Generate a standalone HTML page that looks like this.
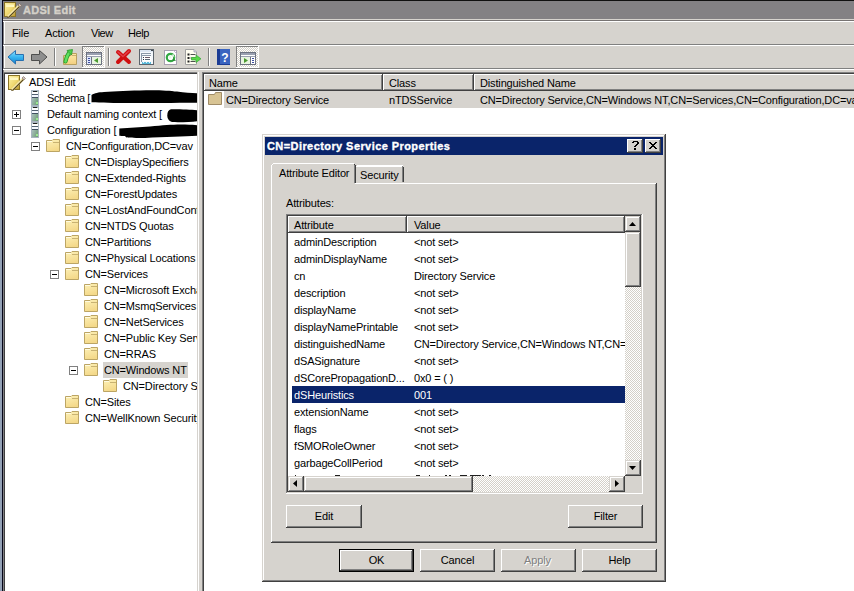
<!DOCTYPE html>
<html><head><meta charset="utf-8"><title>ADSI Edit</title>
<style>
html,body{margin:0;padding:0;width:854px;height:591px;overflow:hidden;background:#fff}
body{position:relative;font-family:'Liberation Sans',sans-serif;font-size:11px}
div,svg{position:absolute;box-sizing:content-box}
.t{white-space:nowrap;line-height:12px;font-size:11px;letter-spacing:-0.15px;font-family:'Liberation Sans',sans-serif;}
svg text{font-family:'Liberation Sans',sans-serif}
</style></head><body>
<div style="left:0px;top:0px;width:854px;height:591px;background:#d6d3ce;"></div>
<div style="left:0px;top:0px;width:2px;height:591px;background:#94a2b6;"></div>
<div style="left:2px;top:0px;width:1px;height:591px;background:#06061a;"></div>
<div style="left:2px;top:0px;width:852px;height:1px;background:#101010;"></div>
<div style="left:3px;top:1px;width:851px;height:18px;background:#838184;"></div>
<svg style="left:3px;top:1px" width="20" height="18" viewBox="0 0 20 18"><defs><linearGradient id="np1" x1="0" y1="0" x2="1" y2="1"><stop offset="0" stop-color="#fff4a8"/><stop offset="0.55" stop-color="#f0d870"/><stop offset="1" stop-color="#b89428"/></linearGradient></defs>
<rect x="1.5" y="1.5" width="11" height="14" fill="url(#np1)" stroke="#8a7428"/>
<rect x="3" y="3.5" width="8" height="2.5" fill="#fff8c0"/>
<path d="M4 15 L15 4 L17 6 L6 17 Z" fill="#f6e8a8"/>
<path d="M5.5 16.5 L16.5 5.5" stroke="#5a4a20" stroke-width="1.1"/>
<path d="M4 15 L4.5 17 L6 17 Z" fill="#5a4a20"/>
<path d="M15 4 L16.5 2.5 L18.5 4.5 L17 6 Z" fill="#d0c0c0" stroke="#7a6a50" stroke-width="0.6"/>
</svg>
<div class="t" style="left:23px;top:4px;color:#d4d0c8;font-weight:bold;letter-spacing:0.3px;-webkit-text-stroke:0.35px #d4d0c8;">ADSI Edit</div>
<div style="left:3px;top:19px;width:851px;height:1px;background:#d6d3ce;"></div>
<div style="left:3px;top:20px;width:851px;height:1px;background:#777372;"></div>
<div style="left:3px;top:21px;width:851px;height:1px;background:#fff;"></div>
<div style="left:3px;top:22px;width:1px;height:569px;background:#808080;"></div>
<div style="left:4px;top:22px;width:1px;height:22px;background:#fff;"></div>
<div class="t" style="left:12px;top:27px;color:#000;">File</div>
<div class="t" style="left:45px;top:27px;color:#000;">Action</div>
<div class="t" style="left:91px;top:27px;color:#000;letter-spacing:-0.5px;">View</div>
<div class="t" style="left:128px;top:27px;color:#000;letter-spacing:-0.4px;">Help</div>
<div style="left:3px;top:44px;width:851px;height:1px;background:#808080;"></div>
<div style="left:3px;top:45px;width:851px;height:1px;background:#fff;"></div>
<div style="left:4px;top:46px;width:1px;height:22px;background:#fff;"></div>
<div style="left:3px;top:68px;width:851px;height:1px;background:#808080;"></div>
<div style="left:3px;top:69px;width:851px;height:1px;background:#fff;"></div>
<div style="left:54px;top:48px;width:1px;height:18px;background:#808080;"></div>
<div style="left:55px;top:48px;width:1px;height:18px;background:#fff;"></div>
<div style="left:108px;top:48px;width:1px;height:18px;background:#808080;"></div>
<div style="left:109px;top:48px;width:1px;height:18px;background:#fff;"></div>
<div style="left:208px;top:48px;width:1px;height:18px;background:#808080;"></div>
<div style="left:209px;top:48px;width:1px;height:18px;background:#fff;"></div>
<div style="left:82px;top:46px;width:23px;height:22px;background-color:#fff;background-image:linear-gradient(45deg,#d4d0c8 25%,transparent 25%,transparent 75%,#d4d0c8 75%),linear-gradient(45deg,#d4d0c8 25%,transparent 25%,transparent 75%,#d4d0c8 75%);background-size:2px 2px;background-position:0 0,1px 1px;"></div>
<div style="left:82px;top:46px;width:23px;height:1px;background:#808080;"></div>
<div style="left:82px;top:46px;width:1px;height:22px;background:#808080;"></div>
<div style="left:82px;top:67px;width:23px;height:1px;background:#fff;"></div>
<div style="left:104px;top:46px;width:1px;height:22px;background:#fff;"></div>
<div style="left:236px;top:46px;width:23px;height:22px;background-color:#fff;background-image:linear-gradient(45deg,#d4d0c8 25%,transparent 25%,transparent 75%,#d4d0c8 75%),linear-gradient(45deg,#d4d0c8 25%,transparent 25%,transparent 75%,#d4d0c8 75%);background-size:2px 2px;background-position:0 0,1px 1px;"></div>
<div style="left:236px;top:46px;width:23px;height:1px;background:#808080;"></div>
<div style="left:236px;top:46px;width:1px;height:22px;background:#808080;"></div>
<div style="left:236px;top:67px;width:23px;height:1px;background:#fff;"></div>
<div style="left:258px;top:46px;width:1px;height:22px;background:#fff;"></div>
<svg style="left:7px;top:49px" width="18" height="17" viewBox="0 0 18 17">
<defs><linearGradient id="gb" x1="0" y1="0" x2="0" y2="1"><stop offset="0" stop-color="#8ee0ff"/><stop offset="0.5" stop-color="#38b4f0"/><stop offset="1" stop-color="#1080d0"/></linearGradient></defs>
<path d="M1 8 L8.5 1.5 L8.5 5.5 L16.5 5.5 L16.5 11.5 L8.5 11.5 L8.5 15 Z" fill="url(#gb)" stroke="#2870b0" stroke-width="1"/>
</svg>
<svg style="left:30px;top:49px" width="18" height="17" viewBox="0 0 18 17">
<path d="M17 8 L9.5 1.5 L9.5 5.5 L1.5 5.5 L1.5 11.5 L9.5 11.5 L9.5 15 Z" fill="#8e8e8e" stroke="#4e4e4e" stroke-width="1"/>
</svg>
<svg style="left:63px;top:49px" width="16" height="17" viewBox="0 0 16 17">
<defs><linearGradient id="fu" x1="0" y1="0" x2="0" y2="1"><stop offset="0" stop-color="#fde9a8"/><stop offset="1" stop-color="#f3cf80"/></linearGradient></defs>
<path d="M0.5 6.5 L8 6.5 L9 4.5 L13.5 4.5 L13.5 15.5 L0.5 15.5 Z" fill="url(#fu)" stroke="#b8a060"/>
<path d="M9 6.5 L13 6.5" stroke="#c8b070"/>
<path d="M2.5 12.5 C3 9 4.5 6 6.5 3" stroke="#2c9a2c" stroke-width="4.2" fill="none" stroke-linecap="round"/>
<path d="M2.5 12.5 C3 9 4.5 6 6.5 3" stroke="#5ee05e" stroke-width="2.4" fill="none" stroke-linecap="round"/>
<path d="M4 1.5 L9.5 0.5 L8.5 6 Z" fill="#4cd04c" stroke="#2c9a2c" stroke-width="0.8"/>
</svg>
<svg style="left:86px;top:52px" width="16" height="13" viewBox="0 0 16 13">
<rect x="0.5" y="0.5" width="15" height="12" fill="#fff" stroke="#6c7280"/>
<rect x="1" y="1" width="14" height="2" fill="#9aa0b0"/>
<rect x="1" y="4" width="14" height="1" fill="#9aa0b0"/>
<rect x="1" y="5" width="4" height="7" fill="#e0e8ff"/>
<rect x="5" y="5" width="1" height="7" fill="#6c7280"/>
<rect x="2" y="6" width="2" height="1" fill="#4050a0"/><rect x="2" y="8" width="2" height="1" fill="#4050a0"/><rect x="2" y="10" width="2" height="1" fill="#4050a0"/>
<rect x="6" y="5" width="9" height="7" fill="#e8f4e0"/>
<path d="M8 8.5 L12 6 L12 11 Z" fill="#4a9a30"/>
</svg>
<svg style="left:240px;top:52px" width="16" height="13" viewBox="0 0 16 13">
<rect x="0.5" y="0.5" width="15" height="12" fill="#fff" stroke="#6c7280"/>
<rect x="1" y="1" width="14" height="2" fill="#9aa0b0"/>
<rect x="1" y="4" width="14" height="1" fill="#9aa0b0"/>
<rect x="1" y="5" width="9" height="7" fill="#e8f4e0"/>
<rect x="10" y="5" width="1" height="7" fill="#6c7280"/>
<rect x="12" y="6" width="2" height="1" fill="#4050a0"/><rect x="12" y="8" width="2" height="1" fill="#4050a0"/><rect x="12" y="10" width="2" height="1" fill="#4050a0"/>
<path d="M4 6 L8 8.5 L4 11 Z" fill="#4a9a30"/>
</svg>
<svg style="left:115px;top:48px" width="18" height="17" viewBox="0 0 18 17">
<path d="M3 4 L14 14 M14 3 L3 14" stroke="#d01010" stroke-width="4" stroke-linecap="round"/>
<path d="M3 4 L8 8.5 M14 3 L9 7.5" stroke="#f06070" stroke-width="1.5" stroke-linecap="round" opacity="0.6"/>
</svg>
<svg style="left:139px;top:49px" width="15" height="16" viewBox="0 0 15 16" shape-rendering="crispEdges">
<rect x="0" y="0" width="15" height="16" fill="#5c646c"/>
<rect x="1" y="1" width="13" height="14" fill="#f4f8fc"/>
<rect x="1" y="1" width="13" height="2" fill="#dce6f2"/>
<rect x="12" y="1" width="2" height="1" fill="#404850"/>
<rect x="2" y="4" width="1" height="9" fill="#8a98a8"/>
<rect x="2" y="4" width="10" height="1" fill="#8a98a8"/>
<rect x="4" y="7" width="8" height="5" fill="#fff"/>
<rect x="3" y="6" width="9" height="1" fill="#8a98a8"/>
<rect x="4" y="8" width="1" height="1" fill="#303848"/><rect x="6" y="8" width="5" height="1" fill="#6a5a68"/>
<rect x="4" y="10" width="1" height="1" fill="#303848"/><rect x="6" y="10" width="5" height="1" fill="#5a6a78"/>
<rect x="3" y="13" width="9" height="2" fill="#58b8d8"/>
<rect x="4" y="13" width="1" height="1" fill="#e0f4fc"/><rect x="7" y="13" width="1" height="1" fill="#e0f4fc"/><rect x="10" y="13" width="1" height="1" fill="#e0f4fc"/>
</svg>
<svg style="left:164px;top:50px" width="13" height="15" viewBox="0 0 13 15">
<rect x="0.5" y="0.5" width="12" height="14" fill="#fff" stroke="#a8a0b0"/>
<path d="M9.5 0.5 L12.5 3.5" stroke="#c8b8d8"/>
<circle cx="6.5" cy="7.5" r="3.7" fill="none" stroke="#34a844" stroke-width="2.2"/>
<path d="M7.5 5 L10.5 7.5 L9.5 4 Z" fill="#e8f8e8"/>
<path d="M9.8 8.5 L12 10.8 L8.2 11 Z" fill="#2a8a34"/>
<circle cx="6" cy="7.2" r="1.3" fill="#e8f8e8"/>
</svg>
<svg style="left:185px;top:49px" width="17" height="16" viewBox="0 0 17 16">
<path d="M0.5 0.5 L9 0.5 L11.5 3 L11.5 15.5 L0.5 15.5 Z" fill="#fffdf0" stroke="#a0a0a0"/>
<path d="M9 0.5 L9 3 L11.5 3" fill="#e0e0f0" stroke="#a0a0b0" stroke-width="0.8"/>
<rect x="2.5" y="4.5" width="2" height="2" fill="#202020"/><rect x="5.5" y="5" width="5" height="1" fill="#505050"/>
<rect x="2.5" y="8" width="2" height="2" fill="#202020"/><rect x="5.5" y="8.5" width="5" height="1" fill="#505050"/>
<rect x="2.5" y="11.5" width="2" height="2" fill="#202020"/><rect x="5.5" y="12" width="5" height="1" fill="#505050"/>
<path d="M6.5 8.5 L11 8.5 L11 6 L16 9.8 L11 13.5 L11 11 L6.5 11 Z" fill="#5ad848" stroke="#38a838" stroke-width="0.7"/>
</svg>
<svg style="left:217px;top:49px" width="13" height="16" viewBox="0 0 13 16">
<rect x="0" y="0" width="13" height="16" fill="#3a64c0"/>
<rect x="0" y="0" width="3" height="16" fill="#1c3c94"/>
<rect x="0" y="15" width="13" height="1" fill="#1c3c94"/>
<text x="8" y="12.5" font-family="Liberation Sans" font-weight="bold" font-size="12" fill="#fff" text-anchor="middle">?</text>
</svg>
<div style="left:3px;top:72px;width:195px;height:1px;background:#808080;"></div>
<div style="left:4px;top:73px;width:194px;height:1px;background:#404040;"></div>
<div style="left:4px;top:73px;width:1px;height:518px;background:#404040;"></div>
<div style="left:5px;top:74px;width:192px;height:517px;background:#fff;"></div>
<div style="left:197px;top:72px;width:1px;height:519px;background:#d6d3ce;"></div>
<div style="left:198px;top:72px;width:1px;height:519px;background:#fff;"></div>
<div style="left:202px;top:72px;width:652px;height:1px;background:#808080;"></div>
<div style="left:202px;top:72px;width:1px;height:519px;background:#808080;"></div>
<div style="left:203px;top:73px;width:651px;height:1px;background:#404040;"></div>
<div style="left:203px;top:73px;width:1px;height:518px;background:#404040;"></div>
<div style="left:204px;top:74px;width:650px;height:517px;background:#fff;"></div>
<div style="left:5px;top:74px;width:192px;height:517px;overflow:hidden">
<svg style="left:2px;top:0px" width="20" height="18" viewBox="0 0 20 18"><defs><linearGradient id="np2" x1="0" y1="0" x2="1" y2="1"><stop offset="0" stop-color="#fff4a8"/><stop offset="0.55" stop-color="#f0d870"/><stop offset="1" stop-color="#b89428"/></linearGradient></defs>
<rect x="1.5" y="1.5" width="11" height="14" fill="url(#np2)" stroke="#8a7428"/>
<rect x="3" y="3.5" width="8" height="2.5" fill="#fff8c0"/>
<path d="M4 15 L15 4 L17 6 L6 17 Z" fill="#f6e8a8"/>
<path d="M5.5 16.5 L16.5 5.5" stroke="#5a4a20" stroke-width="1.1"/>
<path d="M4 15 L4.5 17 L6 17 Z" fill="#5a4a20"/>
<path d="M15 4 L16.5 2.5 L18.5 4.5 L17 6 Z" fill="#d0c0c0" stroke="#7a6a50" stroke-width="0.6"/>
</svg>
<div class="t" style="left:24px;top:2px;color:#000;">ADSI Edit</div>
<svg style="left:26px;top:16px" width="8" height="16" viewBox="0 0 8 16">
<defs><linearGradient id="sg" x1="0" y1="0" x2="1" y2="1"><stop offset="0" stop-color="#c0ccd8"/><stop offset="1" stop-color="#6a9a70"/></linearGradient></defs>
<rect x="0" y="0" width="8" height="16" fill="#a8b4c0"/>
<rect x="1" y="1" width="6" height="14" fill="url(#sg)"/>
<rect x="2" y="1" width="4" height="1" fill="#202020"/>
<rect x="1" y="2" width="6" height="2" fill="#fff"/>
<rect x="1" y="4" width="6" height="1" fill="#506070"/>
<rect x="1" y="5" width="6" height="2" fill="#f4f8ff"/>
<rect x="1" y="7" width="6" height="1" fill="#405060"/>
<rect x="5" y="12" width="2" height="2" fill="#9ae890"/>
</svg>
<div class="t" style="left:42px;top:18px;color:#000;letter-spacing:-0.45px;">Schema [</div>
<svg style="left:26px;top:32px" width="8" height="16" viewBox="0 0 8 16">
<defs><linearGradient id="sg" x1="0" y1="0" x2="1" y2="1"><stop offset="0" stop-color="#c0ccd8"/><stop offset="1" stop-color="#6a9a70"/></linearGradient></defs>
<rect x="0" y="0" width="8" height="16" fill="#a8b4c0"/>
<rect x="1" y="1" width="6" height="14" fill="url(#sg)"/>
<rect x="2" y="1" width="4" height="1" fill="#202020"/>
<rect x="1" y="2" width="6" height="2" fill="#fff"/>
<rect x="1" y="4" width="6" height="1" fill="#506070"/>
<rect x="1" y="5" width="6" height="2" fill="#f4f8ff"/>
<rect x="1" y="7" width="6" height="1" fill="#405060"/>
<rect x="5" y="12" width="2" height="2" fill="#9ae890"/>
</svg>
<div style="left:7px;top:36px;width:7px;height:7px;border:1px solid #808080;background:#fff"></div>
<div style="left:9px;top:40px;width:5px;height:1px;background:#000;"></div>
<div style="left:11px;top:38px;width:1px;height:5px;background:#000;"></div>
<div class="t" style="left:42px;top:34px;color:#000;">Default naming context [</div>
<svg style="left:26px;top:48px" width="8" height="16" viewBox="0 0 8 16">
<defs><linearGradient id="sg" x1="0" y1="0" x2="1" y2="1"><stop offset="0" stop-color="#c0ccd8"/><stop offset="1" stop-color="#6a9a70"/></linearGradient></defs>
<rect x="0" y="0" width="8" height="16" fill="#a8b4c0"/>
<rect x="1" y="1" width="6" height="14" fill="url(#sg)"/>
<rect x="2" y="1" width="4" height="1" fill="#202020"/>
<rect x="1" y="2" width="6" height="2" fill="#fff"/>
<rect x="1" y="4" width="6" height="1" fill="#506070"/>
<rect x="1" y="5" width="6" height="2" fill="#f4f8ff"/>
<rect x="1" y="7" width="6" height="1" fill="#405060"/>
<rect x="5" y="12" width="2" height="2" fill="#9ae890"/>
</svg>
<div style="left:7px;top:52px;width:7px;height:7px;border:1px solid #808080;background:#fff"></div>
<div style="left:9px;top:56px;width:5px;height:1px;background:#000;"></div>
<div class="t" style="left:42px;top:50px;color:#000;">Configuration [</div>
<svg style="left:41px;top:65px" width="14" height="13" viewBox="0 0 14 13">
<defs><linearGradient id="fg" x1="0" y1="0" x2="0.3" y2="1"><stop offset="0" stop-color="#fdf1b8"/><stop offset="1" stop-color="#f4d98a"/></linearGradient></defs>
<path d="M0.5 1.5 L6 1.5 L7 0.5 L13.5 0.5 L13.5 12.5 L0.5 12.5 Z" fill="url(#fg)" stroke="#bca564"/>
<path d="M7 3.5 L13 3.5" stroke="#c8b272"/>
<path d="M1 2.5 L6 2.5" stroke="#fffbe0"/>
</svg>
<div style="left:26px;top:68px;width:7px;height:7px;border:1px solid #808080;background:#fff"></div>
<div style="left:28px;top:72px;width:5px;height:1px;background:#000;"></div>
<div class="t" style="left:61px;top:66px;color:#000;">CN=Configuration,DC=vav</div>
<svg style="left:60px;top:81px" width="14" height="13" viewBox="0 0 14 13">
<defs><linearGradient id="fg" x1="0" y1="0" x2="0.3" y2="1"><stop offset="0" stop-color="#fdf1b8"/><stop offset="1" stop-color="#f4d98a"/></linearGradient></defs>
<path d="M0.5 1.5 L6 1.5 L7 0.5 L13.5 0.5 L13.5 12.5 L0.5 12.5 Z" fill="url(#fg)" stroke="#bca564"/>
<path d="M7 3.5 L13 3.5" stroke="#c8b272"/>
<path d="M1 2.5 L6 2.5" stroke="#fffbe0"/>
</svg>
<div class="t" style="left:80px;top:82px;color:#000;">CN=DisplaySpecifiers</div>
<svg style="left:60px;top:97px" width="14" height="13" viewBox="0 0 14 13">
<defs><linearGradient id="fg" x1="0" y1="0" x2="0.3" y2="1"><stop offset="0" stop-color="#fdf1b8"/><stop offset="1" stop-color="#f4d98a"/></linearGradient></defs>
<path d="M0.5 1.5 L6 1.5 L7 0.5 L13.5 0.5 L13.5 12.5 L0.5 12.5 Z" fill="url(#fg)" stroke="#bca564"/>
<path d="M7 3.5 L13 3.5" stroke="#c8b272"/>
<path d="M1 2.5 L6 2.5" stroke="#fffbe0"/>
</svg>
<div class="t" style="left:80px;top:98px;color:#000;">CN=Extended-Rights</div>
<svg style="left:60px;top:113px" width="14" height="13" viewBox="0 0 14 13">
<defs><linearGradient id="fg" x1="0" y1="0" x2="0.3" y2="1"><stop offset="0" stop-color="#fdf1b8"/><stop offset="1" stop-color="#f4d98a"/></linearGradient></defs>
<path d="M0.5 1.5 L6 1.5 L7 0.5 L13.5 0.5 L13.5 12.5 L0.5 12.5 Z" fill="url(#fg)" stroke="#bca564"/>
<path d="M7 3.5 L13 3.5" stroke="#c8b272"/>
<path d="M1 2.5 L6 2.5" stroke="#fffbe0"/>
</svg>
<div class="t" style="left:80px;top:114px;color:#000;">CN=ForestUpdates</div>
<svg style="left:60px;top:129px" width="14" height="13" viewBox="0 0 14 13">
<defs><linearGradient id="fg" x1="0" y1="0" x2="0.3" y2="1"><stop offset="0" stop-color="#fdf1b8"/><stop offset="1" stop-color="#f4d98a"/></linearGradient></defs>
<path d="M0.5 1.5 L6 1.5 L7 0.5 L13.5 0.5 L13.5 12.5 L0.5 12.5 Z" fill="url(#fg)" stroke="#bca564"/>
<path d="M7 3.5 L13 3.5" stroke="#c8b272"/>
<path d="M1 2.5 L6 2.5" stroke="#fffbe0"/>
</svg>
<div class="t" style="left:80px;top:130px;color:#000;">CN=LostAndFoundConfig</div>
<svg style="left:60px;top:145px" width="14" height="13" viewBox="0 0 14 13">
<defs><linearGradient id="fg" x1="0" y1="0" x2="0.3" y2="1"><stop offset="0" stop-color="#fdf1b8"/><stop offset="1" stop-color="#f4d98a"/></linearGradient></defs>
<path d="M0.5 1.5 L6 1.5 L7 0.5 L13.5 0.5 L13.5 12.5 L0.5 12.5 Z" fill="url(#fg)" stroke="#bca564"/>
<path d="M7 3.5 L13 3.5" stroke="#c8b272"/>
<path d="M1 2.5 L6 2.5" stroke="#fffbe0"/>
</svg>
<div class="t" style="left:80px;top:146px;color:#000;">CN=NTDS Quotas</div>
<svg style="left:60px;top:161px" width="14" height="13" viewBox="0 0 14 13">
<defs><linearGradient id="fg" x1="0" y1="0" x2="0.3" y2="1"><stop offset="0" stop-color="#fdf1b8"/><stop offset="1" stop-color="#f4d98a"/></linearGradient></defs>
<path d="M0.5 1.5 L6 1.5 L7 0.5 L13.5 0.5 L13.5 12.5 L0.5 12.5 Z" fill="url(#fg)" stroke="#bca564"/>
<path d="M7 3.5 L13 3.5" stroke="#c8b272"/>
<path d="M1 2.5 L6 2.5" stroke="#fffbe0"/>
</svg>
<div class="t" style="left:80px;top:162px;color:#000;">CN=Partitions</div>
<svg style="left:60px;top:177px" width="14" height="13" viewBox="0 0 14 13">
<defs><linearGradient id="fg" x1="0" y1="0" x2="0.3" y2="1"><stop offset="0" stop-color="#fdf1b8"/><stop offset="1" stop-color="#f4d98a"/></linearGradient></defs>
<path d="M0.5 1.5 L6 1.5 L7 0.5 L13.5 0.5 L13.5 12.5 L0.5 12.5 Z" fill="url(#fg)" stroke="#bca564"/>
<path d="M7 3.5 L13 3.5" stroke="#c8b272"/>
<path d="M1 2.5 L6 2.5" stroke="#fffbe0"/>
</svg>
<div class="t" style="left:80px;top:178px;color:#000;">CN=Physical Locations</div>
<svg style="left:60px;top:193px" width="14" height="13" viewBox="0 0 14 13">
<defs><linearGradient id="fg" x1="0" y1="0" x2="0.3" y2="1"><stop offset="0" stop-color="#fdf1b8"/><stop offset="1" stop-color="#f4d98a"/></linearGradient></defs>
<path d="M0.5 1.5 L6 1.5 L7 0.5 L13.5 0.5 L13.5 12.5 L0.5 12.5 Z" fill="url(#fg)" stroke="#bca564"/>
<path d="M7 3.5 L13 3.5" stroke="#c8b272"/>
<path d="M1 2.5 L6 2.5" stroke="#fffbe0"/>
</svg>
<div style="left:45px;top:196px;width:7px;height:7px;border:1px solid #808080;background:#fff"></div>
<div style="left:47px;top:200px;width:5px;height:1px;background:#000;"></div>
<div class="t" style="left:80px;top:194px;color:#000;">CN=Services</div>
<svg style="left:79px;top:209px" width="14" height="13" viewBox="0 0 14 13">
<defs><linearGradient id="fg" x1="0" y1="0" x2="0.3" y2="1"><stop offset="0" stop-color="#fdf1b8"/><stop offset="1" stop-color="#f4d98a"/></linearGradient></defs>
<path d="M0.5 1.5 L6 1.5 L7 0.5 L13.5 0.5 L13.5 12.5 L0.5 12.5 Z" fill="url(#fg)" stroke="#bca564"/>
<path d="M7 3.5 L13 3.5" stroke="#c8b272"/>
<path d="M1 2.5 L6 2.5" stroke="#fffbe0"/>
</svg>
<div class="t" style="left:99px;top:210px;color:#000;">CN=Microsoft Exchange</div>
<svg style="left:79px;top:225px" width="14" height="13" viewBox="0 0 14 13">
<defs><linearGradient id="fg" x1="0" y1="0" x2="0.3" y2="1"><stop offset="0" stop-color="#fdf1b8"/><stop offset="1" stop-color="#f4d98a"/></linearGradient></defs>
<path d="M0.5 1.5 L6 1.5 L7 0.5 L13.5 0.5 L13.5 12.5 L0.5 12.5 Z" fill="url(#fg)" stroke="#bca564"/>
<path d="M7 3.5 L13 3.5" stroke="#c8b272"/>
<path d="M1 2.5 L6 2.5" stroke="#fffbe0"/>
</svg>
<div class="t" style="left:99px;top:226px;color:#000;">CN=MsmqServices</div>
<svg style="left:79px;top:241px" width="14" height="13" viewBox="0 0 14 13">
<defs><linearGradient id="fg" x1="0" y1="0" x2="0.3" y2="1"><stop offset="0" stop-color="#fdf1b8"/><stop offset="1" stop-color="#f4d98a"/></linearGradient></defs>
<path d="M0.5 1.5 L6 1.5 L7 0.5 L13.5 0.5 L13.5 12.5 L0.5 12.5 Z" fill="url(#fg)" stroke="#bca564"/>
<path d="M7 3.5 L13 3.5" stroke="#c8b272"/>
<path d="M1 2.5 L6 2.5" stroke="#fffbe0"/>
</svg>
<div class="t" style="left:99px;top:242px;color:#000;">CN=NetServices</div>
<svg style="left:79px;top:257px" width="14" height="13" viewBox="0 0 14 13">
<defs><linearGradient id="fg" x1="0" y1="0" x2="0.3" y2="1"><stop offset="0" stop-color="#fdf1b8"/><stop offset="1" stop-color="#f4d98a"/></linearGradient></defs>
<path d="M0.5 1.5 L6 1.5 L7 0.5 L13.5 0.5 L13.5 12.5 L0.5 12.5 Z" fill="url(#fg)" stroke="#bca564"/>
<path d="M7 3.5 L13 3.5" stroke="#c8b272"/>
<path d="M1 2.5 L6 2.5" stroke="#fffbe0"/>
</svg>
<div class="t" style="left:99px;top:258px;color:#000;">CN=Public Key Services</div>
<svg style="left:79px;top:273px" width="14" height="13" viewBox="0 0 14 13">
<defs><linearGradient id="fg" x1="0" y1="0" x2="0.3" y2="1"><stop offset="0" stop-color="#fdf1b8"/><stop offset="1" stop-color="#f4d98a"/></linearGradient></defs>
<path d="M0.5 1.5 L6 1.5 L7 0.5 L13.5 0.5 L13.5 12.5 L0.5 12.5 Z" fill="url(#fg)" stroke="#bca564"/>
<path d="M7 3.5 L13 3.5" stroke="#c8b272"/>
<path d="M1 2.5 L6 2.5" stroke="#fffbe0"/>
</svg>
<div class="t" style="left:99px;top:274px;color:#000;">CN=RRAS</div>
<svg style="left:79px;top:289px" width="14" height="13" viewBox="0 0 14 13">
<defs><linearGradient id="fg" x1="0" y1="0" x2="0.3" y2="1"><stop offset="0" stop-color="#fdf1b8"/><stop offset="1" stop-color="#f4d98a"/></linearGradient></defs>
<path d="M0.5 1.5 L6 1.5 L7 0.5 L13.5 0.5 L13.5 12.5 L0.5 12.5 Z" fill="url(#fg)" stroke="#bca564"/>
<path d="M7 3.5 L13 3.5" stroke="#c8b272"/>
<path d="M1 2.5 L6 2.5" stroke="#fffbe0"/>
</svg>
<div style="left:64px;top:292px;width:7px;height:7px;border:1px solid #808080;background:#fff"></div>
<div style="left:66px;top:296px;width:5px;height:1px;background:#000;"></div>
<div style="left:98px;top:288px;width:85px;height:16px;background:#d6d3ce;"></div>
<div class="t" style="left:99px;top:290px;color:#000;">CN=Windows NT</div>
<svg style="left:98px;top:305px" width="14" height="13" viewBox="0 0 14 13">
<defs><linearGradient id="fg" x1="0" y1="0" x2="0.3" y2="1"><stop offset="0" stop-color="#fdf1b8"/><stop offset="1" stop-color="#f4d98a"/></linearGradient></defs>
<path d="M0.5 1.5 L6 1.5 L7 0.5 L13.5 0.5 L13.5 12.5 L0.5 12.5 Z" fill="url(#fg)" stroke="#bca564"/>
<path d="M7 3.5 L13 3.5" stroke="#c8b272"/>
<path d="M1 2.5 L6 2.5" stroke="#fffbe0"/>
</svg>
<div class="t" style="left:118px;top:306px;color:#000;">CN=Directory Service</div>
<svg style="left:60px;top:321px" width="14" height="13" viewBox="0 0 14 13">
<defs><linearGradient id="fg" x1="0" y1="0" x2="0.3" y2="1"><stop offset="0" stop-color="#fdf1b8"/><stop offset="1" stop-color="#f4d98a"/></linearGradient></defs>
<path d="M0.5 1.5 L6 1.5 L7 0.5 L13.5 0.5 L13.5 12.5 L0.5 12.5 Z" fill="url(#fg)" stroke="#bca564"/>
<path d="M7 3.5 L13 3.5" stroke="#c8b272"/>
<path d="M1 2.5 L6 2.5" stroke="#fffbe0"/>
</svg>
<div class="t" style="left:80px;top:322px;color:#000;">CN=Sites</div>
<svg style="left:60px;top:337px" width="14" height="13" viewBox="0 0 14 13">
<defs><linearGradient id="fg" x1="0" y1="0" x2="0.3" y2="1"><stop offset="0" stop-color="#fdf1b8"/><stop offset="1" stop-color="#f4d98a"/></linearGradient></defs>
<path d="M0.5 1.5 L6 1.5 L7 0.5 L13.5 0.5 L13.5 12.5 L0.5 12.5 Z" fill="url(#fg)" stroke="#bca564"/>
<path d="M7 3.5 L13 3.5" stroke="#c8b272"/>
<path d="M1 2.5 L6 2.5" stroke="#fffbe0"/>
</svg>
<div class="t" style="left:80px;top:338px;color:#000;">CN=WellKnown Security Principals</div>
<svg style="left:75px;top:11px" width="125" height="60" viewBox="80 85 125 60">
<path d="M91.5 95 C95 93 98 92.4 104 92 C115 91.4 130 90.6 146 90.2 C160 90 170 90.6 177 91.6 C185 92.6 192 93.2 198 93.3 L198 102.8 C175 103 150 103 130 103 C115 103 100 102.6 91.5 102.2 Z" fill="#000"/>
<path d="M171 109.3 C180 109.2 192 109.6 198 110.5 L198 121 C192 122 182 122.3 172 122.1 C168.5 121 167.3 118 167.3 115.5 C167.3 112 168.5 109.8 171 109.3 Z" fill="#000"/>
<path d="M119.3 128.6 C130 127.8 140 127.6 150 126.6 C165 125 175 124.3 185 124.6 C192 124.8 196 125.2 198 125.4 L198 135.8 C185 136.4 165 137.4 145 137.9 C135 138 128 137.6 126 137.2 L125 136 C122 136 120 135.9 119.3 135.8 Z" fill="#000"/>
</svg>
</div>
<div style="left:204px;top:74px;width:650px;height:517px;overflow:hidden">
<div style="left:0px;top:0px;width:179px;height:17px;background:#d6d3ce;"></div>
<div style="left:0px;top:0px;width:179px;height:1px;background:#fff;"></div>
<div style="left:0px;top:0px;width:1px;height:17px;background:#fff;"></div>
<div style="left:0px;top:16px;width:179px;height:1px;background:#404040;"></div>
<div style="left:178px;top:0px;width:1px;height:17px;background:#404040;"></div>
<div style="left:1px;top:15px;width:177px;height:1px;background:#808080;"></div>
<div style="left:177px;top:1px;width:1px;height:15px;background:#808080;"></div>
<div class="t" style="left:5px;top:3px;color:#000;">Name</div>
<div style="left:179px;top:0px;width:91px;height:17px;background:#d6d3ce;"></div>
<div style="left:179px;top:0px;width:91px;height:1px;background:#fff;"></div>
<div style="left:179px;top:0px;width:1px;height:17px;background:#fff;"></div>
<div style="left:179px;top:16px;width:91px;height:1px;background:#404040;"></div>
<div style="left:269px;top:0px;width:1px;height:17px;background:#404040;"></div>
<div style="left:180px;top:15px;width:89px;height:1px;background:#808080;"></div>
<div style="left:268px;top:1px;width:1px;height:15px;background:#808080;"></div>
<div class="t" style="left:185px;top:3px;color:#000;">Class</div>
<div style="left:270px;top:0px;width:400px;height:17px;background:#d6d3ce;"></div>
<div style="left:270px;top:0px;width:400px;height:1px;background:#fff;"></div>
<div style="left:270px;top:0px;width:1px;height:17px;background:#fff;"></div>
<div style="left:270px;top:16px;width:400px;height:1px;background:#404040;"></div>
<div style="left:669px;top:0px;width:1px;height:17px;background:#404040;"></div>
<div style="left:271px;top:15px;width:398px;height:1px;background:#808080;"></div>
<div style="left:668px;top:1px;width:1px;height:15px;background:#808080;"></div>
<div class="t" style="left:276px;top:3px;color:#000;">Distinguished Name</div>
<div style="left:20px;top:17px;width:650px;height:17px;background:#d6d3ce;"></div>
<svg style="left:4px;top:18px" width="15" height="14" viewBox="0 0 15 14">
<path d="M0.5 2.5 L6.5 2.5 L7.5 0.5 L13.5 0.5 L13.5 12.5 L0.5 12.5 Z" fill="#d8c494" stroke="#a08c68"/>
</svg>
<div class="t" style="left:22px;top:20px;color:#000;">CN=Directory Service</div>
<div class="t" style="left:185px;top:20px;color:#000;">nTDSService</div>
<div class="t" style="left:276px;top:20px;color:#000;">CN=Directory Service,CN=Windows NT,CN=Services,CN=Configuration,DC=vav</div>
</div>
<div style="left:262px;top:134px;width:404px;height:448px;background:#d6d3ce;"></div>
<div style="left:262px;top:134px;width:403px;height:1px;background:#d6d3ce;"></div>
<div style="left:262px;top:134px;width:1px;height:447px;background:#d6d3ce;"></div>
<div style="left:263px;top:135px;width:401px;height:1px;background:#fff;"></div>
<div style="left:263px;top:135px;width:1px;height:445px;background:#fff;"></div>
<div style="left:262px;top:581px;width:404px;height:1px;background:#404040;"></div>
<div style="left:665px;top:134px;width:1px;height:448px;background:#404040;"></div>
<div style="left:263px;top:580px;width:402px;height:1px;background:#808080;"></div>
<div style="left:664px;top:135px;width:1px;height:446px;background:#808080;"></div>
<div style="left:265px;top:137px;width:398px;height:18px;background:#0a246a;"></div>
<div class="t" style="left:267px;top:140px;color:#fff;font-weight:bold;letter-spacing:0.42px;-webkit-text-stroke:0.35px #fff;">CN=Directory Service Properties</div>
<div style="left:627px;top:139px;width:16px;height:14px;background:#d6d3ce;"></div>
<div style="left:627px;top:139px;width:15px;height:1px;background:#fff;"></div>
<div style="left:627px;top:139px;width:1px;height:13px;background:#fff;"></div>
<div style="left:627px;top:152px;width:16px;height:1px;background:#404040;"></div>
<div style="left:642px;top:139px;width:1px;height:14px;background:#404040;"></div>
<div style="left:628px;top:151px;width:14px;height:1px;background:#808080;"></div>
<div style="left:641px;top:140px;width:1px;height:12px;background:#808080;"></div>
<svg style="left:632px;top:141px" width="7" height="9" viewBox="0 0 7 9" shape-rendering="crispEdges" fill="#000"><rect x="1" y="0" width="1" height="1"/><rect x="2" y="0" width="1" height="1"/><rect x="3" y="0" width="1" height="1"/><rect x="4" y="0" width="1" height="1"/><rect x="5" y="0" width="1" height="1"/><rect x="0" y="1" width="1" height="1"/><rect x="1" y="1" width="1" height="1"/><rect x="5" y="1" width="1" height="1"/><rect x="6" y="1" width="1" height="1"/><rect x="5" y="2" width="1" height="1"/><rect x="6" y="2" width="1" height="1"/><rect x="4" y="3" width="1" height="1"/><rect x="5" y="3" width="1" height="1"/><rect x="3" y="4" width="1" height="1"/><rect x="4" y="4" width="1" height="1"/><rect x="2" y="5" width="1" height="1"/><rect x="3" y="5" width="1" height="1"/><rect x="2" y="7" width="1" height="1"/><rect x="3" y="7" width="1" height="1"/><rect x="2" y="8" width="1" height="1"/><rect x="3" y="8" width="1" height="1"/></svg>
<div style="left:645px;top:139px;width:16px;height:14px;background:#d6d3ce;"></div>
<div style="left:645px;top:139px;width:15px;height:1px;background:#fff;"></div>
<div style="left:645px;top:139px;width:1px;height:13px;background:#fff;"></div>
<div style="left:645px;top:152px;width:16px;height:1px;background:#404040;"></div>
<div style="left:660px;top:139px;width:1px;height:14px;background:#404040;"></div>
<div style="left:646px;top:151px;width:14px;height:1px;background:#808080;"></div>
<div style="left:659px;top:140px;width:1px;height:12px;background:#808080;"></div>
<svg style="left:649px;top:142px" width="8" height="7" viewBox="0 0 8 7" shape-rendering="crispEdges" fill="#000"><rect x="0" y="0" width="1" height="1"/><rect x="1" y="0" width="1" height="1"/><rect x="6" y="0" width="1" height="1"/><rect x="7" y="0" width="1" height="1"/><rect x="1" y="1" width="1" height="1"/><rect x="2" y="1" width="1" height="1"/><rect x="5" y="1" width="1" height="1"/><rect x="6" y="1" width="1" height="1"/><rect x="2" y="2" width="1" height="1"/><rect x="3" y="2" width="1" height="1"/><rect x="4" y="2" width="1" height="1"/><rect x="5" y="2" width="1" height="1"/><rect x="3" y="3" width="1" height="1"/><rect x="4" y="3" width="1" height="1"/><rect x="2" y="4" width="1" height="1"/><rect x="3" y="4" width="1" height="1"/><rect x="4" y="4" width="1" height="1"/><rect x="5" y="4" width="1" height="1"/><rect x="1" y="5" width="1" height="1"/><rect x="2" y="5" width="1" height="1"/><rect x="5" y="5" width="1" height="1"/><rect x="6" y="5" width="1" height="1"/><rect x="0" y="6" width="1" height="1"/><rect x="1" y="6" width="1" height="1"/><rect x="6" y="6" width="1" height="1"/><rect x="7" y="6" width="1" height="1"/></svg>
<div style="left:271px;top:183px;width:386px;height:360px;background:#d6d3ce;"></div>
<div style="left:271px;top:183px;width:386px;height:1px;background:#fff;"></div>
<div style="left:271px;top:183px;width:1px;height:360px;background:#fff;"></div>
<div style="left:271px;top:542px;width:386px;height:1px;background:#404040;"></div>
<div style="left:656px;top:183px;width:1px;height:360px;background:#404040;"></div>
<div style="left:272px;top:541px;width:384px;height:1px;background:#808080;"></div>
<div style="left:655px;top:184px;width:1px;height:358px;background:#808080;"></div>
<div style="left:356px;top:165px;width:48px;height:18px;background:#d6d3ce;"></div>
<div style="left:356px;top:166px;width:47px;height:1px;background:#fff;"></div>
<div style="left:357px;top:165px;width:46px;height:1px;background:#fff;"></div>
<div style="left:402px;top:166px;width:1px;height:16px;background:#808080;"></div>
<div style="left:403px;top:167px;width:1px;height:15px;background:#404040;"></div>
<div class="t" style="left:360px;top:169px;color:#000;">Security</div>
<div style="left:272px;top:164px;width:83px;height:20px;background:#d6d3ce;"></div>
<div style="left:273px;top:163px;width:81px;height:1px;background:#fff;"></div>
<div style="left:271px;top:165px;width:1px;height:18px;background:#fff;"></div>
<div style="left:272px;top:164px;width:1px;height:1px;background:#fff;"></div>
<div style="left:354px;top:164px;width:1px;height:1px;background:#404040;"></div>
<div style="left:355px;top:165px;width:1px;height:18px;background:#404040;"></div>
<div style="left:354px;top:165px;width:1px;height:18px;background:#808080;"></div>
<div class="t" style="left:279px;top:167px;color:#000;">Attribute Editor</div>
<div class="t" style="left:286px;top:197px;color:#000;">Attributes:</div>
<div style="left:286px;top:214px;width:357px;height:280px;background:#fff;"></div>
<div style="left:286px;top:214px;width:356px;height:1px;background:#808080;"></div>
<div style="left:286px;top:214px;width:1px;height:279px;background:#808080;"></div>
<div style="left:287px;top:215px;width:354px;height:1px;background:#404040;"></div>
<div style="left:287px;top:215px;width:1px;height:277px;background:#404040;"></div>
<div style="left:286px;top:493px;width:357px;height:1px;background:#fff;"></div>
<div style="left:642px;top:214px;width:1px;height:280px;background:#fff;"></div>
<div style="left:287px;top:492px;width:355px;height:1px;background:#d6d3ce;"></div>
<div style="left:641px;top:215px;width:1px;height:278px;background:#d6d3ce;"></div>
<div style="left:288px;top:216px;width:119px;height:17px;background:#d6d3ce;"></div>
<div style="left:288px;top:216px;width:119px;height:1px;background:#fff;"></div>
<div style="left:288px;top:216px;width:1px;height:17px;background:#fff;"></div>
<div style="left:288px;top:232px;width:119px;height:1px;background:#404040;"></div>
<div style="left:406px;top:216px;width:1px;height:17px;background:#404040;"></div>
<div style="left:289px;top:231px;width:117px;height:1px;background:#808080;"></div>
<div style="left:405px;top:217px;width:1px;height:15px;background:#808080;"></div>
<div class="t" style="left:294px;top:219px;color:#000;">Attribute</div>
<div style="left:407px;top:216px;width:218px;height:17px;background:#d6d3ce;"></div>
<div style="left:407px;top:216px;width:218px;height:1px;background:#fff;"></div>
<div style="left:407px;top:216px;width:1px;height:17px;background:#fff;"></div>
<div style="left:407px;top:232px;width:218px;height:1px;background:#404040;"></div>
<div style="left:624px;top:216px;width:1px;height:17px;background:#404040;"></div>
<div style="left:408px;top:231px;width:216px;height:1px;background:#808080;"></div>
<div style="left:623px;top:217px;width:1px;height:15px;background:#808080;"></div>
<div class="t" style="left:414px;top:219px;color:#000;">Value</div>
<div style="left:288px;top:233px;width:337px;height:243px;overflow:hidden">
<div class="t" style="left:6px;top:3px;color:#000;">adminDescription</div>
<div class="t" style="left:126px;top:3px;color:#000;">&lt;not set&gt;</div>
<div class="t" style="left:6px;top:20px;color:#000;">adminDisplayName</div>
<div class="t" style="left:126px;top:20px;color:#000;">&lt;not set&gt;</div>
<div class="t" style="left:6px;top:37px;color:#000;">cn</div>
<div class="t" style="left:126px;top:37px;color:#000;">Directory Service</div>
<div class="t" style="left:6px;top:54px;color:#000;">description</div>
<div class="t" style="left:126px;top:54px;color:#000;">&lt;not set&gt;</div>
<div class="t" style="left:6px;top:71px;color:#000;">displayName</div>
<div class="t" style="left:126px;top:71px;color:#000;">&lt;not set&gt;</div>
<div class="t" style="left:6px;top:88px;color:#000;">displayNamePrintable</div>
<div class="t" style="left:126px;top:88px;color:#000;">&lt;not set&gt;</div>
<div class="t" style="left:6px;top:105px;color:#000;">distinguishedName</div>
<div class="t" style="left:126px;top:105px;color:#000;">CN=Directory Service,CN=Windows NT,CN=Services</div>
<div class="t" style="left:6px;top:122px;color:#000;">dSASignature</div>
<div class="t" style="left:126px;top:122px;color:#000;">&lt;not set&gt;</div>
<div class="t" style="left:6px;top:139px;color:#000;">dSCorePropagationD...</div>
<div class="t" style="left:126px;top:139px;color:#000;">0x0 = ( )</div>
<div style="left:4px;top:153px;width:334px;height:17px;background:#0a246a;"></div>
<div class="t" style="left:6px;top:156px;color:#fff;">dSHeuristics</div>
<div class="t" style="left:126px;top:156px;color:#fff;">001</div>
<div class="t" style="left:6px;top:173px;color:#000;">extensionName</div>
<div class="t" style="left:126px;top:173px;color:#000;">&lt;not set&gt;</div>
<div class="t" style="left:6px;top:190px;color:#000;">flags</div>
<div class="t" style="left:126px;top:190px;color:#000;">&lt;not set&gt;</div>
<div class="t" style="left:6px;top:207px;color:#000;">fSMORoleOwner</div>
<div class="t" style="left:126px;top:207px;color:#000;">&lt;not set&gt;</div>
<div class="t" style="left:6px;top:224px;color:#000;">garbageCollPeriod</div>
<div class="t" style="left:126px;top:224px;color:#000;">&lt;not set&gt;</div>
<div class="t" style="left:6px;top:241px;color:#000;">instanceType</div>
<div class="t" style="left:126px;top:241px;color:#000;">0x4 = ( WRITE )</div>
</div>
<div style="left:295px;top:475px;width:1px;height:1px;background:#202020;"></div>
<div style="left:335px;top:475px;width:5px;height:1px;background:#202020;"></div>
<div style="left:416px;top:475px;width:4px;height:1px;background:#202020;"></div>
<div style="left:429px;top:475px;width:1px;height:1px;background:#202020;"></div>
<div style="left:445px;top:475px;width:2px;height:1px;background:#202020;"></div>
<div style="left:449px;top:475px;width:2px;height:1px;background:#202020;"></div>
<div style="left:460px;top:475px;width:7px;height:1px;background:#202020;"></div>
<div style="left:470px;top:475px;width:3px;height:1px;background:#202020;"></div>
<div style="left:473px;top:475px;width:8px;height:1px;background:#202020;"></div>
<div style="left:482px;top:475px;width:2px;height:1px;background:#202020;"></div>
<div style="left:489px;top:475px;width:2px;height:1px;background:#202020;"></div>
<div style="left:625px;top:216px;width:16px;height:260px;background-color:#fff;background-image:linear-gradient(45deg,#d4d0c8 25%,transparent 25%,transparent 75%,#d4d0c8 75%),linear-gradient(45deg,#d4d0c8 25%,transparent 25%,transparent 75%,#d4d0c8 75%);background-size:2px 2px;background-position:0 0,1px 1px;"></div>
<div style="left:625px;top:216px;width:16px;height:16px;background:#d6d3ce;"></div>
<div style="left:625px;top:216px;width:15px;height:1px;background:#d6d3ce;"></div>
<div style="left:625px;top:216px;width:1px;height:15px;background:#d6d3ce;"></div>
<div style="left:626px;top:217px;width:13px;height:1px;background:#fff;"></div>
<div style="left:626px;top:217px;width:1px;height:13px;background:#fff;"></div>
<div style="left:625px;top:231px;width:16px;height:1px;background:#404040;"></div>
<div style="left:640px;top:216px;width:1px;height:16px;background:#404040;"></div>
<div style="left:626px;top:230px;width:14px;height:1px;background:#808080;"></div>
<div style="left:639px;top:217px;width:1px;height:14px;background:#808080;"></div>
<svg style="left:629px;top:222px" width="7" height="4"><path d="M0 4 L3.5 0 L7 4 Z" fill="#000"/></svg>
<div style="left:625px;top:232px;width:16px;height:55px;background:#d6d3ce;"></div>
<div style="left:625px;top:232px;width:15px;height:1px;background:#d6d3ce;"></div>
<div style="left:625px;top:232px;width:1px;height:54px;background:#d6d3ce;"></div>
<div style="left:626px;top:233px;width:13px;height:1px;background:#fff;"></div>
<div style="left:626px;top:233px;width:1px;height:52px;background:#fff;"></div>
<div style="left:625px;top:286px;width:16px;height:1px;background:#404040;"></div>
<div style="left:640px;top:232px;width:1px;height:55px;background:#404040;"></div>
<div style="left:626px;top:285px;width:14px;height:1px;background:#808080;"></div>
<div style="left:639px;top:233px;width:1px;height:53px;background:#808080;"></div>

<div style="left:625px;top:460px;width:16px;height:16px;background:#d6d3ce;"></div>
<div style="left:625px;top:460px;width:15px;height:1px;background:#d6d3ce;"></div>
<div style="left:625px;top:460px;width:1px;height:15px;background:#d6d3ce;"></div>
<div style="left:626px;top:461px;width:13px;height:1px;background:#fff;"></div>
<div style="left:626px;top:461px;width:1px;height:13px;background:#fff;"></div>
<div style="left:625px;top:475px;width:16px;height:1px;background:#404040;"></div>
<div style="left:640px;top:460px;width:1px;height:16px;background:#404040;"></div>
<div style="left:626px;top:474px;width:14px;height:1px;background:#808080;"></div>
<div style="left:639px;top:461px;width:1px;height:14px;background:#808080;"></div>
<svg style="left:629px;top:466px" width="7" height="4"><path d="M0 0 L3.5 4 L7 0 Z" fill="#000"/></svg>
<div style="left:288px;top:476px;width:337px;height:16px;background-color:#fff;background-image:linear-gradient(45deg,#d4d0c8 25%,transparent 25%,transparent 75%,#d4d0c8 75%),linear-gradient(45deg,#d4d0c8 25%,transparent 25%,transparent 75%,#d4d0c8 75%);background-size:2px 2px;background-position:0 0,1px 1px;"></div>
<div style="left:288px;top:476px;width:16px;height:16px;background:#d6d3ce;"></div>
<div style="left:288px;top:476px;width:15px;height:1px;background:#d6d3ce;"></div>
<div style="left:288px;top:476px;width:1px;height:15px;background:#d6d3ce;"></div>
<div style="left:289px;top:477px;width:13px;height:1px;background:#fff;"></div>
<div style="left:289px;top:477px;width:1px;height:13px;background:#fff;"></div>
<div style="left:288px;top:491px;width:16px;height:1px;background:#404040;"></div>
<div style="left:303px;top:476px;width:1px;height:16px;background:#404040;"></div>
<div style="left:289px;top:490px;width:14px;height:1px;background:#808080;"></div>
<div style="left:302px;top:477px;width:1px;height:14px;background:#808080;"></div>
<svg style="left:293px;top:480px" width="4" height="7"><path d="M4 0 L0 3.5 L4 7 Z" fill="#000"/></svg>
<div style="left:304px;top:476px;width:169px;height:16px;background:#d6d3ce;"></div>
<div style="left:304px;top:476px;width:168px;height:1px;background:#d6d3ce;"></div>
<div style="left:304px;top:476px;width:1px;height:15px;background:#d6d3ce;"></div>
<div style="left:305px;top:477px;width:166px;height:1px;background:#fff;"></div>
<div style="left:305px;top:477px;width:1px;height:13px;background:#fff;"></div>
<div style="left:304px;top:491px;width:169px;height:1px;background:#404040;"></div>
<div style="left:472px;top:476px;width:1px;height:16px;background:#404040;"></div>
<div style="left:305px;top:490px;width:167px;height:1px;background:#808080;"></div>
<div style="left:471px;top:477px;width:1px;height:14px;background:#808080;"></div>

<div style="left:609px;top:476px;width:16px;height:16px;background:#d6d3ce;"></div>
<div style="left:609px;top:476px;width:15px;height:1px;background:#d6d3ce;"></div>
<div style="left:609px;top:476px;width:1px;height:15px;background:#d6d3ce;"></div>
<div style="left:610px;top:477px;width:13px;height:1px;background:#fff;"></div>
<div style="left:610px;top:477px;width:1px;height:13px;background:#fff;"></div>
<div style="left:609px;top:491px;width:16px;height:1px;background:#404040;"></div>
<div style="left:624px;top:476px;width:1px;height:16px;background:#404040;"></div>
<div style="left:610px;top:490px;width:14px;height:1px;background:#808080;"></div>
<div style="left:623px;top:477px;width:1px;height:14px;background:#808080;"></div>
<svg style="left:615px;top:480px" width="4" height="7"><path d="M0 0 L4 3.5 L0 7 Z" fill="#000"/></svg>
<div style="left:625px;top:476px;width:16px;height:16px;background:#d6d3ce;"></div>
<div style="left:286px;top:505px;width:76px;height:23px;background:#d6d3ce;"></div>
<div style="left:286px;top:505px;width:75px;height:1px;background:#fff;"></div>
<div style="left:286px;top:505px;width:1px;height:22px;background:#fff;"></div>
<div style="left:286px;top:527px;width:76px;height:1px;background:#404040;"></div>
<div style="left:361px;top:505px;width:1px;height:23px;background:#404040;"></div>
<div style="left:287px;top:526px;width:74px;height:1px;background:#808080;"></div>
<div style="left:360px;top:506px;width:1px;height:21px;background:#808080;"></div>
<div class="t" style="left:286px;top:510px;width:76px;text-align:center">Edit</div>
<div style="left:568px;top:505px;width:75px;height:23px;background:#d6d3ce;"></div>
<div style="left:568px;top:505px;width:74px;height:1px;background:#fff;"></div>
<div style="left:568px;top:505px;width:1px;height:22px;background:#fff;"></div>
<div style="left:568px;top:527px;width:75px;height:1px;background:#404040;"></div>
<div style="left:642px;top:505px;width:1px;height:23px;background:#404040;"></div>
<div style="left:569px;top:526px;width:73px;height:1px;background:#808080;"></div>
<div style="left:641px;top:506px;width:1px;height:21px;background:#808080;"></div>
<div class="t" style="left:568px;top:510px;width:75px;text-align:center">Filter</div>
<div style="left:339px;top:549px;width:75px;height:23px;background:#000;"></div>
<div style="left:340px;top:550px;width:73px;height:21px;background:#d6d3ce;"></div>
<div style="left:340px;top:550px;width:72px;height:1px;background:#fff;"></div>
<div style="left:340px;top:550px;width:1px;height:20px;background:#fff;"></div>
<div style="left:340px;top:570px;width:73px;height:1px;background:#404040;"></div>
<div style="left:412px;top:550px;width:1px;height:21px;background:#404040;"></div>
<div style="left:341px;top:569px;width:71px;height:1px;background:#808080;"></div>
<div style="left:411px;top:551px;width:1px;height:19px;background:#808080;"></div>
<div class="t" style="left:339px;top:554px;width:75px;text-align:center">OK</div>
<div style="left:420px;top:549px;width:75px;height:23px;background:#d6d3ce;"></div>
<div style="left:420px;top:549px;width:74px;height:1px;background:#fff;"></div>
<div style="left:420px;top:549px;width:1px;height:22px;background:#fff;"></div>
<div style="left:420px;top:571px;width:75px;height:1px;background:#404040;"></div>
<div style="left:494px;top:549px;width:1px;height:23px;background:#404040;"></div>
<div style="left:421px;top:570px;width:73px;height:1px;background:#808080;"></div>
<div style="left:493px;top:550px;width:1px;height:21px;background:#808080;"></div>
<div class="t" style="left:420px;top:554px;width:75px;text-align:center">Cancel</div>
<div style="left:501px;top:549px;width:75px;height:23px;background:#d6d3ce;"></div>
<div style="left:501px;top:549px;width:74px;height:1px;background:#fff;"></div>
<div style="left:501px;top:549px;width:1px;height:22px;background:#fff;"></div>
<div style="left:501px;top:571px;width:75px;height:1px;background:#404040;"></div>
<div style="left:575px;top:549px;width:1px;height:23px;background:#404040;"></div>
<div style="left:502px;top:570px;width:73px;height:1px;background:#808080;"></div>
<div style="left:574px;top:550px;width:1px;height:21px;background:#808080;"></div>
<div class="t" style="left:501px;top:555px;width:75px;text-align:center;color:#fff">Apply</div>
<div class="t" style="left:500px;top:554px;width:75px;text-align:center;color:#808080">Apply</div>
<div style="left:582px;top:549px;width:75px;height:23px;background:#d6d3ce;"></div>
<div style="left:582px;top:549px;width:74px;height:1px;background:#fff;"></div>
<div style="left:582px;top:549px;width:1px;height:22px;background:#fff;"></div>
<div style="left:582px;top:571px;width:75px;height:1px;background:#404040;"></div>
<div style="left:656px;top:549px;width:1px;height:23px;background:#404040;"></div>
<div style="left:583px;top:570px;width:73px;height:1px;background:#808080;"></div>
<div style="left:655px;top:550px;width:1px;height:21px;background:#808080;"></div>
<div class="t" style="left:582px;top:554px;width:75px;text-align:center">Help</div>

</body></html>
